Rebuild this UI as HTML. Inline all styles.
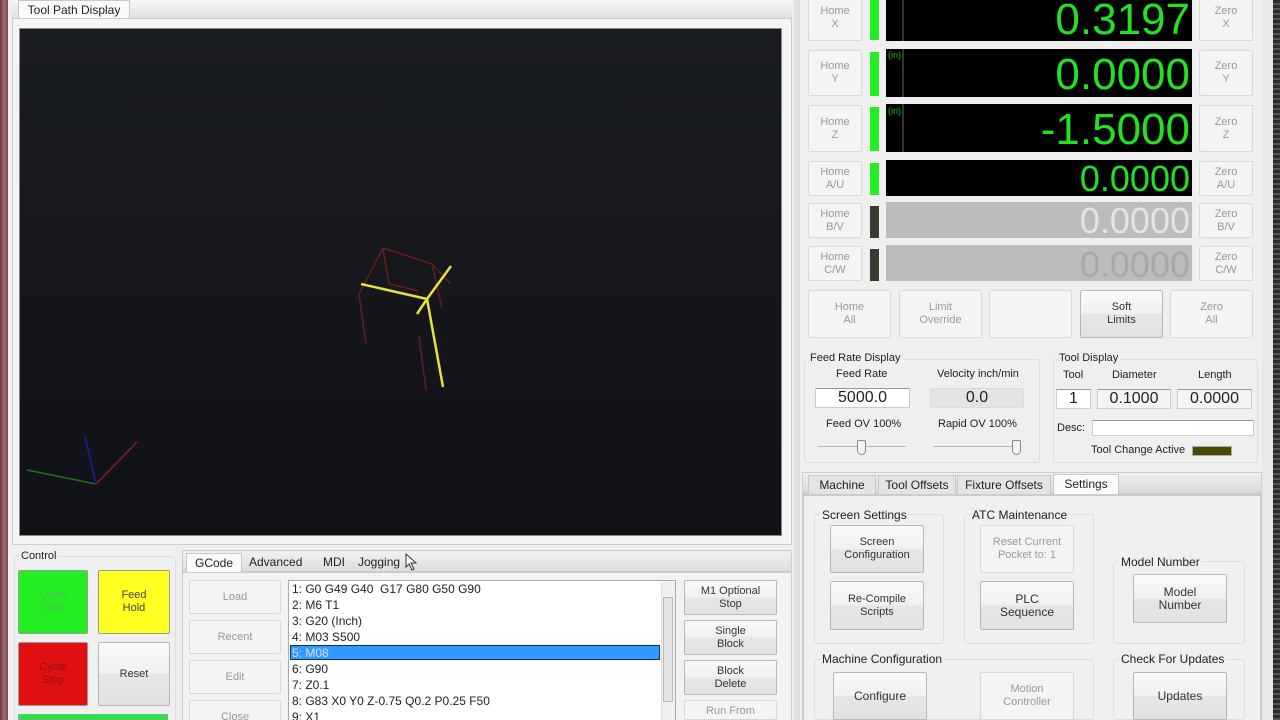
<!DOCTYPE html>
<html style="width:1280px;height:720px;overflow:hidden"><head><meta charset="utf-8"><style>
*{box-sizing:border-box;margin:0;padding:0}
html,body{overflow:hidden}
body{width:1280px;height:720px;overflow:hidden;background:#efefef;font-family:"Liberation Sans",sans-serif;font-size:11px;color:#222;position:relative}
.a{position:absolute}
.btn{position:absolute;border:1px solid #b8b8b8;border-radius:2px;background:linear-gradient(#fafafa,#f0f0f0 50%,#e6e6e6 50%,#e2e2e2);display:flex;align-items:center;justify-content:center;text-align:center;line-height:13px;font-size:11px;color:#333}
.lite{background:#f4f4f4;color:#999;border-color:#d8d8d8}
.dro{position:absolute;left:886px;width:306px;background:#000;color:#22e022;text-align:right;font-size:44px;line-height:1;padding-right:2px;overflow:hidden}
.bar{position:absolute;left:870px;width:9px;background:#22ee22}
.in{position:absolute;left:888px;font-size:9px;color:#22c022}
.fld{position:absolute;background:#fff;border:1px solid #ccc;border-top-color:#999;font-size:16px;text-align:center}
.grp{position:absolute;border:1px solid #dedede;border-radius:3px}
.lbl{position:absolute;font-size:11px;color:#222;background:#efefef;padding:0 2px}
.tab{position:absolute;font-size:12px;color:#222;padding:2px 0;text-align:center;border:1px solid #c8c8c8;border-bottom:none;background:#e4e4e4}
.gl{position:absolute;left:292px;font-size:12px;line-height:16px;color:#222}
</style></head><body>
<div class="a" style="left:0;top:0;width:8px;height:720px;background:linear-gradient(90deg,#6e3a42,#a06a72,#7a4a50)"></div>
<div class="a" style="left:1262px;top:0;width:11px;height:720px;background:#e8e8e8"></div>
<div class="a" style="left:1273px;top:0;width:7px;height:720px;background:repeating-linear-gradient(#2a2a2a 0 3px,#555 3px 5px)"></div>
<div class="a" style="left:794px;top:0;width:6px;height:720px;background:#e0e0e0"></div>

<div class="a" style="left:12px;top:0;width:780px;height:18px;background:linear-gradient(#f6f6f6,#e0e0e0)"></div>
<div class="tab" style="left:18px;top:0;width:112px;height:18px;background:#fafafa;font-size:12px;padding-top:2px">Tool Path Display</div>
<div class="a" style="left:12px;top:18px;width:780px;height:527px;border:1px solid #ccc;background:#f4f4f4"></div>
<div class="a" style="left:19px;top:28px;width:763px;height:508px;background:linear-gradient(#1a1d20,#111118);border:1px solid #888"></div>
<svg class="a" style="left:19px;top:28px" width="763" height="508">
<g stroke="#6a1a1e" stroke-width="1.5" fill="none">
<path d="M364 220 L413 236 M364 220 L340 266 L347 316 M364 220 L370 256 M413 236 L423 280 M413 236 L432 256 M400 308 L407 362 M370 256 L400 263"/></g>
<g stroke="#e6e040" stroke-width="2.5" fill="none">
<path d="M342 256 L408 271 L432 238 M408 271 L398 286 M408 271 L424 359"/></g>
<path d="M8 442 L77 456" stroke-width="1.5" fill="none" stroke="#207020"/>
<path d="M77 456 L118 414" stroke="#8a1a1a" stroke-width="1.5"/>
<path d="M77 456 L66 408" stroke="#1a1a80" stroke-width="2"/>
</svg>

<div class="grp" style="left:14px;top:556px;width:162px;height:170px"></div>
<div class="lbl" style="left:19px;top:550px">Control</div>
<div class="btn" style="left:18px;top:570px;width:70px;height:64px;background:#22ee22;color:#55bb55;border-color:#999">Cycle<br>Start</div>
<div class="btn" style="left:98px;top:570px;width:72px;height:64px;background:#ffff22;color:#444;border-color:#999">Feed<br>Hold</div>
<div class="btn" style="left:18px;top:642px;width:70px;height:64px;background:#e01010;color:#901010;border-color:#999">Cycle<br>Stop</div>
<div class="btn" style="left:98px;top:642px;width:72px;height:64px">Reset</div>
<div class="a" style="left:18px;top:714px;width:150px;height:6px;background:#22ee22;border:1px solid #7ab"></div>

<div class="a" style="left:182px;top:550px;width:610px;height:22px;background:linear-gradient(#f2f2f2,#dcdcdc);border:1px solid #ccc"></div>
<div class="tab" style="left:186px;top:553px;width:56px;height:19px;background:#fafafa">GCode</div>
<div class="a" style="left:249px;top:555px;font-size:12px">Advanced</div>
<div class="a" style="left:323px;top:555px;font-size:12px">MDI</div>
<div class="a" style="left:358px;top:555px;font-size:12px">Jogging</div>
<svg class="a" style="left:405px;top:553px" width="14" height="18"><path d="M1 1 L1 14 L4 11 L7 17 L9 16 L6 10 L11 10 Z" fill="#fff" stroke="#333"/></svg>
<div class="a" style="left:182px;top:572px;width:610px;height:150px;border:1px solid #ccc;background:#f2f2f2"></div>
<div class="btn lite" style="left:189px;top:580px;width:92px;height:34px">Load</div>
<div class="btn lite" style="left:189px;top:620px;width:92px;height:34px">Recent</div>
<div class="btn lite" style="left:189px;top:660px;width:92px;height:34px">Edit</div>
<div class="btn lite" style="left:189px;top:700px;width:92px;height:34px">Close</div>
<div class="a" style="left:288px;top:580px;width:388px;height:145px;background:#fff;border:1px solid #aaa"></div>
<div class="a" style="left:661px;top:582px;width:14px;height:140px;background:#f0f0f0;border-left:1px solid #ddd"></div>
<div class="a" style="left:663px;top:597px;width:10px;height:105px;background:#e4e4e4;border:1px solid #bbb"></div>
<div class="a" style="left:290px;top:645px;width:370px;height:15px;background:#3399ff;border:1px solid #036"></div>
<div class="gl" style="top:581px">1: G0 G49 G40&nbsp; G17 G80 G50 G90</div>
<div class="gl" style="top:597px">2: M6 T1</div>
<div class="gl" style="top:613px">3: G20 (Inch)</div>
<div class="gl" style="top:629px">4: M03 S500</div>
<div class="gl" style="top:645px;color:#dde">5: M08</div>
<div class="gl" style="top:661px">6: G90</div>
<div class="gl" style="top:677px">7: Z0.1</div>
<div class="gl" style="top:693px">8: G83 X0 Y0 Z-0.75 Q0.2 P0.25 F50</div>
<div class="gl" style="top:709px">9: X1</div>
<div class="btn" style="left:684px;top:580px;width:93px;height:35px">M1 Optional<br>Stop</div>
<div class="btn" style="left:684px;top:620px;width:93px;height:35px">Single<br>Block</div>
<div class="btn" style="left:684px;top:660px;width:93px;height:35px">Block<br>Delete</div>
<div class="btn lite" style="left:684px;top:700px;width:93px;height:20px;align-items:flex-start;padding-top:4px">Run From</div>

<div class="btn lite" style="left:808px;top:-6px;width:54px;height:47px">Home<br>X</div>
<div class="btn lite" style="left:808px;top:50px;width:54px;height:46px">Home<br>Y</div>
<div class="btn lite" style="left:808px;top:105px;width:54px;height:47px">Home<br>Z</div>
<div class="btn lite" style="left:808px;top:161px;width:54px;height:35px">Home<br>A/U</div>
<div class="btn lite" style="left:808px;top:203px;width:54px;height:35px">Home<br>B/V</div>
<div class="btn lite" style="left:808px;top:246px;width:54px;height:35px">Home<br>C/W</div>
<div class="btn lite" style="left:1199px;top:-6px;width:54px;height:47px">Zero<br>X</div>
<div class="btn lite" style="left:1199px;top:50px;width:54px;height:46px">Zero<br>Y</div>
<div class="btn lite" style="left:1199px;top:105px;width:54px;height:47px">Zero<br>Z</div>
<div class="btn lite" style="left:1199px;top:161px;width:54px;height:35px">Zero<br>A/U</div>
<div class="btn lite" style="left:1199px;top:203px;width:54px;height:35px">Zero<br>B/V</div>
<div class="btn lite" style="left:1199px;top:246px;width:54px;height:35px">Zero<br>C/W</div>
<div class="bar" style="top:0;height:40px"></div>
<div class="bar" style="top:52px;height:44px"></div>
<div class="bar" style="top:107px;height:44px"></div>
<div class="bar" style="top:163px;height:32px"></div>
<div class="bar" style="top:206px;height:32px;background:#3a3a30"></div>
<div class="bar" style="top:249px;height:32px;background:#3a3a30"></div>
<div class="dro" style="top:0;height:41px;line-height:40px">0.3197</div>
<div class="dro" style="top:49px;height:48px;line-height:52px">0.0000</div>
<div class="dro" style="top:104px;height:48px;line-height:52px">-1.5000</div>
<div class="dro" style="top:160px;height:36px;font-size:36px;line-height:38px">0.0000</div>
<div class="dro" style="top:202px;height:36px;font-size:36px;line-height:38px;background:#bcbcbc;color:#e4e4e4">0.0000</div>
<div class="dro" style="top:245px;height:36px;font-size:36px;line-height:40px;background:#bcbcbc;color:#a8a8a8">0.0000</div>
<div class="a" style="left:886px;top:49px;width:18px;height:48px;border-right:2px solid #333"></div>
<div class="a" style="left:886px;top:104px;width:18px;height:48px;border-right:2px solid #333"></div>
<div class="a" style="left:886px;top:0;width:18px;height:41px;border-right:2px solid #333"></div>
<div class="in" style="top:50px">(in)</div>
<div class="in" style="top:106px">(in)</div>
<div class="btn lite" style="left:808px;top:290px;width:83px;height:48px">Home<br>All</div>
<div class="btn lite" style="left:899px;top:290px;width:83px;height:48px">Limit<br>Override</div>
<div class="btn lite" style="left:989px;top:290px;width:83px;height:48px"></div>
<div class="btn" style="left:1080px;top:290px;width:83px;height:48px">Soft<br>Limits</div>
<div class="btn lite" style="left:1170px;top:290px;width:83px;height:48px">Zero<br>All</div>

<div class="grp" style="left:804px;top:359px;width:236px;height:104px"></div>
<div class="lbl" style="left:808px;top:352px">Feed Rate Display</div>
<div class="a" style="left:836px;top:368px">Feed Rate</div>
<div class="a" style="left:937px;top:368px">Velocity inch/min</div>
<div class="fld" style="left:815px;top:388px;width:95px;height:20px">5000.0</div>
<div class="fld" style="left:930px;top:388px;width:94px;height:20px;background:#e4e4e4;border-color:#ddd">0.0</div>
<div class="a" style="left:826px;top:418px">Feed OV 100%</div>
<div class="a" style="left:938px;top:418px">Rapid OV 100%</div>
<div class="a" style="left:818px;top:446px;width:88px;height:1px;background:#bbb"></div>
<div class="a" style="left:933px;top:446px;width:88px;height:1px;background:#bbb"></div>
<div class="a" style="left:857px;top:440px;width:9px;height:15px;border:1px solid #888;border-radius:2px 2px 5px 5px;background:#f4f4f4"></div>
<div class="a" style="left:1012px;top:440px;width:9px;height:15px;border:1px solid #888;border-radius:2px 2px 5px 5px;background:#f4f4f4"></div>
<div class="grp" style="left:1053px;top:359px;width:205px;height:104px"></div>
<div class="lbl" style="left:1057px;top:352px">Tool Display</div>
<div class="a" style="left:1063px;top:369px">Tool</div>
<div class="a" style="left:1112px;top:369px">Diameter</div>
<div class="a" style="left:1198px;top:369px">Length</div>
<div class="fld" style="left:1056px;top:389px;width:35px;height:20px">1</div>
<div class="fld" style="left:1097px;top:389px;width:74px;height:20px;background:#f4f4f4">0.1000</div>
<div class="fld" style="left:1177px;top:389px;width:75px;height:20px;background:#f4f4f4">0.0000</div>
<div class="a" style="left:1057px;top:422px">Desc:</div>
<div class="fld" style="left:1092px;top:420px;width:162px;height:16px"></div>
<div class="a" style="left:1091px;top:444px">Tool Change Active</div>
<div class="a" style="left:1192px;top:446px;width:40px;height:10px;background:#4a4a00;border:1px solid #aaa"></div>

<div class="a" style="left:802px;top:472px;width:460px;height:22px;background:linear-gradient(#f0f0f0,#d8d8d8);border:1px solid #ccc"></div>
<div class="tab" style="left:808px;top:475px;width:68px;height:19px">Machine</div>
<div class="tab" style="left:878px;top:475px;width:78px;height:19px">Tool Offsets</div>
<div class="tab" style="left:957px;top:475px;width:94px;height:19px">Fixture Offsets</div>
<div class="tab" style="left:1053px;top:474px;width:66px;height:20px;background:#fafafa">Settings</div>
<div class="a" style="left:802px;top:494px;width:460px;height:230px;border:2px solid #ccc;background:#f0f0f0"></div>
<div class="grp" style="left:814px;top:514px;width:130px;height:130px"></div>
<div class="lbl" style="left:820px;top:508px;font-size:12px">Screen Settings</div>
<div class="btn" style="left:830px;top:525px;width:94px;height:48px">Screen<br>Configuration</div>
<div class="btn" style="left:830px;top:581px;width:94px;height:49px">Re-Compile<br>Scripts</div>
<div class="grp" style="left:964px;top:514px;width:130px;height:130px"></div>
<div class="lbl" style="left:970px;top:508px;font-size:12px">ATC Maintenance</div>
<div class="btn lite" style="left:980px;top:525px;width:94px;height:48px">Reset Current<br>Pocket to: 1</div>
<div class="btn" style="left:980px;top:581px;width:94px;height:49px;font-size:12px">PLC<br>Sequence</div>
<div class="grp" style="left:1113px;top:561px;width:132px;height:83px"></div>
<div class="lbl" style="left:1119px;top:555px;font-size:12px">Model Number</div>
<div class="btn" style="left:1133px;top:574px;width:94px;height:49px;font-size:12px">Model<br>Number</div>
<div class="grp" style="left:814px;top:659px;width:280px;height:61px"></div>
<div class="lbl" style="left:820px;top:652px;font-size:12px">Machine Configuration</div>
<div class="btn" style="left:833px;top:672px;width:94px;height:48px;font-size:12px">Configure</div>
<div class="btn lite" style="left:980px;top:672px;width:94px;height:48px">Motion<br>Controller</div>
<div class="grp" style="left:1113px;top:659px;width:132px;height:61px"></div>
<div class="lbl" style="left:1119px;top:652px;font-size:12px">Check For Updates</div>
<div class="btn" style="left:1133px;top:672px;width:94px;height:48px;font-size:12px">Updates</div>
</body></html>
